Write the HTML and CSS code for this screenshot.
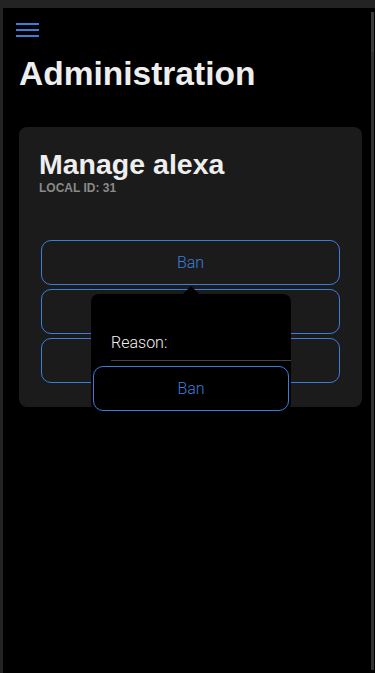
FILE: index.html
```html
<!DOCTYPE html>
<html>
<head>
<meta charset="utf-8">
<link rel="stylesheet" href="styles.css">
</head>
<body>
<div class="frame">
  <div class="viewport">
    <main class="content">
      <button class="menu" aria-label="menu">
        <svg width="24" height="16" viewBox="0 0 24 16"><rect x="0" y="1" width="23" height="2" fill="#3b7ddd"/><rect x="0" y="7" width="23" height="2" fill="#3b7ddd"/><rect x="0" y="13" width="23" height="2" fill="#3b7ddd"/></svg>
      </button>
      <h1 class="title">Administration</h1>
      <section class="card">
        <h2 class="card-title">Manage alexa</h2>
        <div class="local-id">LOCAL ID: 31</div>
        <div class="actions">
          <div class="action-wrap">
            <button class="btn">Ban</button>
            <div class="popover">
              <div class="arrow"></div>
              <div class="field">
                <span class="label">Reason:</span>
              </div>
              <button class="btn btn-pop">Ban</button>
            </div>
          </div>
          <button class="btn"></button>
          <button class="btn"></button>
        </div>
      </section>
    </main>
    <div class="scrollbar"><div class="thumb"></div></div>
  </div>
</div>
</body>
</html>
```
FILE: styles.css
```css
* { box-sizing: border-box; }
html, body { margin: 0; padding: 0; height: 100%; }
body {
  background: #232323;
  font-family: "Liberation Sans", Arial, sans-serif;
  overflow: hidden;
}
.frame {
  height: 673px;
  padding: 8px 0 0 3px;
  background: #232323;
}
.viewport {
  height: 665px;
  background: #000;
  display: flex;
}
.content {
  flex: 1;
  padding: 14px 9px 0 13px;
}
.menu {
  display: block;
  background: none;
  border: 0;
  padding: 0;
  width: 24px;
  height: 16px;
}
.menu svg { display: block; }
.title {
  margin: 16px 0 0 3px;
  font-size: 33.5px;
  font-weight: bold;
  color: #eeeeee;
  line-height: 40px;
}
.card {
  margin: 33px 0 0 3px;
  background: #1b1b1b;
  border-radius: 8px;
  padding: 22px 22px 24px 20px;
  width: 343px;
}
.card-title {
  margin: 0;
  font-size: 28.5px;
  font-weight: bold;
  color: #eeeeee;
  line-height: 30px;
}
.local-id {
  margin-top: 2px;
  font-size: 12px;
  font-weight: bold;
  color: #8a8a8a;
  line-height: 14px;
}
.actions {
  margin-top: 45px;
  padding-left: 2px;
  display: flex;
  flex-direction: column;
  gap: 4px;
}
.action-wrap { position: relative; }
.btn {
  display: block;
  width: 100%;
  height: 45px;
  background: transparent;
  border: 1px solid #3b7ddd;
  border-radius: 10px;
  color: #3b7ddd;
  font-family: Roboto, "Liberation Sans", Arial, sans-serif;
  font-weight: 300;
  font-size: 16px;
  padding: 0;
}
.popover {
  position: absolute;
  left: 50px;
  top: 54px;
  width: 200px;
  background: #000;
  border-radius: 8px;
  padding: 36px 0 0 2px;
  z-index: 2;
}
.arrow {
  position: absolute;
  top: -8px;
  left: 91px;
  width: 0;
  height: 0;
  border-left: 9px solid transparent;
  border-right: 9px solid transparent;
  border-bottom: 9px solid #000;
}
.field {
  margin-left: 18px;
  border-bottom: 1px solid #444;
  height: 31px;
}
.label {
  color: #f0f0f0;
  font-family: Roboto, "Liberation Sans", Arial, sans-serif;
  font-weight: 300;
  font-size: 16px;
  line-height: 26px;
}
.btn-pop {
  margin-top: 5px;
  width: 196px;
  height: 45px;
  background: #000;
}
.scrollbar {
  width: 4px;
  padding-top: 4px;
  display: flex;
  flex-direction: column;
}
.thumb {
  width: 3px;
  height: 658px;
  background: linear-gradient(#3c3c3c 0, #3c3c3c 40px, #333 40px);
}
```
